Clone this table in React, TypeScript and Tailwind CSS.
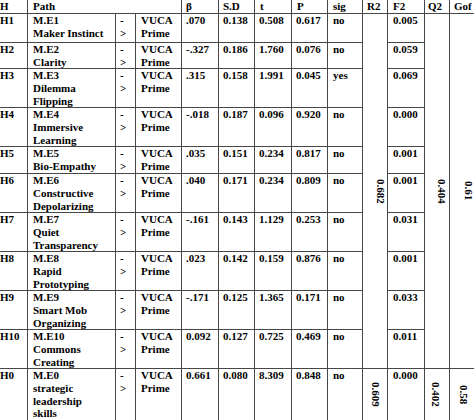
import React from "react";

type Row = {
  h: string;
  path: string[];
  b: string;
  sd: string;
  t: string;
  p: string;
  sig: string;
  f2: string;
};

const rows: Row[] = [
  { h: "H1", path: ["M.E1", "Maker Instinct"], b: ".070", sd: "0.138", t: "0.508", p: "0.617", sig: "no", f2: "0.005" },
  { h: "H2", path: ["M.E2", "Clarity"], b: "-.327", sd: "0.186", t: "1.760", p: "0.076", sig: "no", f2: "0.059" },
  { h: "H3", path: ["M.E3", "Dilemma", "Flipping"], b: ".315", sd: "0.158", t: "1.991", p: "0.045", sig: "yes", f2: "0.069" },
  { h: "H4", path: ["M.E4", "Immersive", "Learning"], b: "-.018", sd: "0.187", t: "0.096", p: "0.920", sig: "no", f2: "0.000" },
  { h: "H5", path: ["M.E5", "Bio-Empathy"], b: ".035", sd: "0.151", t: "0.234", p: "0.817", sig: "no", f2: "0.001" },
  { h: "H6", path: ["M.E6", "Constructive", "Depolarizing"], b: ".040", sd: "0.171", t: "0.234", p: "0.809", sig: "no", f2: "0.001" },
  { h: "H7", path: ["M.E7", "Quiet", "Transparency"], b: "-.161", sd: "0.143", t: "1.129", p: "0.253", sig: "no", f2: "0.031" },
  { h: "H8", path: ["M.E8", "Rapid", "Prototyping"], b: ".023", sd: "0.142", t: "0.159", p: "0.876", sig: "no", f2: "0.001" },
  { h: "H9", path: ["M.E9", "Smart Mob", "Organizing"], b: "-.171", sd: "0.125", t: "1.365", p: "0.171", sig: "no", f2: "0.033" },
  { h: "H10", path: ["M.E10", "Commons", "Creating"], b: "0.092", sd: "0.127", t: "0.725", p: "0.469", sig: "no", f2: "0.011" },
];

const cell = "border-r border-b border-[#474747] leading-[12.8px] whitespace-nowrap overflow-hidden";

function Lines({ lines }: { lines: string[] }) {
  return (
    <>
      {lines.map((l, i) => (
        <div key={i}>{l}</div>
      ))}
    </>
  );
}

function Vert({ text, pad, span }: { text: string; pad: string; span?: boolean }) {
  return (
    <div className={`${cell} flex items-center ${pad} ${span ? "row-span-10" : ""}`}>
      <span className="[writing-mode:vertical-rl] leading-[12px]">{text}</span>
    </div>
  );
}

export default function App() {
  return (
    <div className="w-[474px] h-[420px] overflow-hidden bg-white">
      <div className="grid w-[481px] grid-cols-[28px_88px_20px_46px_37px_36px_37px_36px_35px_25px_37px_25px_32px] grid-rows-[14px_29px_26px_39px_39px_27px_39px_39px_39px_39px_39px_52px] font-['Liberation_Serif','Times_New_Roman',serif] text-[11px] font-bold text-black">
        {/* header */}
        <div className={`${cell} pl-[0px]`}>H</div>
        <div className={`${cell} col-span-3 pl-[5px]`}>Path</div>
        <div className={`${cell} pl-[4px]`}>β</div>
        <div className={`${cell} pl-[4px]`}>S.D</div>
        <div className={`${cell} pl-[5px]`}>t</div>
        <div className={`${cell} pl-[5px]`}>P</div>
        <div className={`${cell} pl-[5px]`}>sig</div>
        <div className={`${cell} pl-[4px]`}>R2</div>
        <div className={`${cell} pl-[5px]`}>F2</div>
        <div className={`${cell} pl-[3px]`}>Q2</div>
        <div className={`${cell} pl-[4px]`}>Gof</div>

        {rows.map((r, i) => (
          <React.Fragment key={r.h}>
            <div className={`${cell} pl-[0px]`}>{r.h}</div>
            <div className={`${cell} pl-[5px]`}>
              <Lines lines={r.path} />
            </div>
            <div className={`${cell} pl-[4px]`}>
              <Lines lines={["-", ">"]} />
            </div>
            <div className={`${cell} pl-[5px]`}>
              <Lines lines={["VUCA", "Prime"]} />
            </div>
            <div className={`${cell} pl-[4px]`}>{r.b}</div>
            <div className={`${cell} pl-[4px]`}>{r.sd}</div>
            <div className={`${cell} pl-[4px]`}>{r.t}</div>
            <div className={`${cell} pl-[4px]`}>{r.p}</div>
            <div className={`${cell} pl-[5px]`}>{r.sig}</div>
            {i === 0 && <Vert text="0.682" pad="pl-[12px]" span />}
            <div className={`${cell} pl-[5px]`}>{r.f2}</div>
            {i === 0 && (
              <>
                <Vert text="0.404" pad="pl-[11px]" span />
                <Vert text="0.61" pad="pl-[13px]" span />
              </>
            )}
          </React.Fragment>
        ))}

        {/* H0 row */}
        <div className={`${cell} pl-[0px]`}>H0</div>
        <div className={`${cell} pl-[5px]`}>
          <Lines lines={["M.E0", "strategic", "leadership", "skills"]} />
        </div>
        <div className={`${cell} pl-[4px]`}>
          <Lines lines={["-", ">"]} />
        </div>
        <div className={`${cell} pl-[5px]`}>
          <Lines lines={["VUCA", "Prime"]} />
        </div>
        <div className={`${cell} pl-[4px]`}>0.661</div>
        <div className={`${cell} pl-[4px]`}>0.080</div>
        <div className={`${cell} pl-[4px]`}>8.309</div>
        <div className={`${cell} pl-[4px]`}>0.848</div>
        <div className={`${cell} pl-[5px]`}>no</div>
        <Vert text="0.609" pad="pl-[7px]" />
        <div className={`${cell} pl-[5px]`}>0.000</div>
        <Vert text="0.402" pad="pl-[5px]" />
        <Vert text="0.58" pad="pl-[8px]" />
      </div>
    </div>
  );
}
